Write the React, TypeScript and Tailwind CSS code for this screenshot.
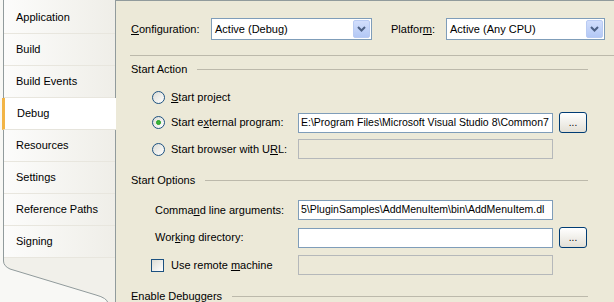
import React from 'react';

const tabs = ['Application', 'Build', 'Build Events', 'Debug', 'Resources', 'Settings', 'Reference Paths', 'Signing'];

const Chevron = () => (
  <svg width="9" height="6" viewBox="0 0 9 6">
    <path d="M1 1 L4.5 4.5 L8 1" fill="none" stroke="#4d6185" strokeWidth="2" />
  </svg>
);

const Combo = ({ value, width }: { value: string; width: string }) => (
  <div className={`${width} h-[22px] flex items-stretch border border-[#7f9db9] bg-white p-px`}>
    <span className="flex-1 pl-[2px] flex items-center">{value}</span>
    <span className="w-[17px] flex items-center justify-center rounded-[2px] border border-[#b9cbf3] bg-gradient-to-b from-[#d2defc] to-[#b3c8f5]">
      <Chevron />
    </span>
  </div>
);

const GroupHeader = ({ title, className }: { title: string; className: string }) => (
  <div className={`flex items-center h-[14px] mr-[26px] ${className}`}>
    <span>{title}</span>
    <span className="flex-1 ml-[10px] h-px bg-[#bcb9ab]" />
  </div>
);

const Radio = ({ checked }: { checked?: boolean }) => (
  <span className="w-[13px] h-[13px] rounded-full border border-[#1c5180] bg-gradient-to-br from-[#dcdcd5] to-white flex items-center justify-center">
    {checked && <span className="w-[5px] h-[5px] rounded-full bg-[#3bb33b] border border-[#21a121]" />}
  </span>
);

const TextBox = ({ value, disabled }: { value?: string; disabled?: boolean }) => (
  <div
    className={`w-[255px] h-[20px] border overflow-hidden whitespace-nowrap pl-[2px] flex items-center text-[10.5px] ${
      disabled ? 'bg-[#ece9d8] border-[#b5b8ba]' : 'bg-white border-[#7f9db9]'
    }`}
  >
    {value}
  </div>
);

const Browse = () => (
  <div className="ml-[6px] w-[28px] h-[21px] rounded-[3px] border border-[#003c74] bg-gradient-to-b from-white to-[#e3e0d6] flex items-end justify-center pb-[4px] leading-none text-[10px]">
    ...
  </div>
);

export default function App() {
  return (
    <div className="w-[614px] h-[302px] overflow-hidden flex text-[11px] text-black font-['Liberation_Sans',Arial,sans-serif]">
      {/* Tab strip */}
      <div className="w-[115px] shrink-0 flex flex-col bg-[#f8f8f5]">
        <div className="ml-[3px] border-l border-[#919b9c] bg-gradient-to-r from-[#fcfcfb] to-[#efeee8] pt-[2px]">
          {tabs.map((t) =>
            t === 'Debug' ? (
              <div
                key={t}
                className="relative z-10 h-[32px] -ml-[2px] mr-[-1px] border-l-[3px] border-l-[#f2b446] border-b border-b-[#e6e4dc] bg-white pl-[12px] flex items-center"
              >
                {t}
              </div>
            ) : (
              <div key={t} className="h-[32px] border-b border-[#e8e6de] pl-[12px] flex items-center">
                {t}
              </div>
            )
          )}
        </div>
        <svg width="115" height="45" viewBox="0 0 115 45" className="shrink-0">
          <path d="M0 0 H115 V45 H108 Q107 40 96 37 L10 11 Q3.5 8 3.5 3 V0 Z" fill="#f1f0ea" />
          <path d="M3.5 0 V3 Q3.5 8 10 11 L96 37 Q107 40 108 45" fill="none" stroke="#919b9c" strokeWidth="1" />
        </svg>
      </div>

      {/* Property page */}
      <div className="flex-1 border-l border-t border-[#919b9c] bg-[#ece9d8] pl-[15px]">
        <div className="flex items-center mt-[17px]">
          <span className="w-[80px]">
            <u>C</u>onfiguration:
          </span>
          <Combo value="Active (Debug)" width="w-[161px]" />
          <span className="ml-[19px] w-[55px]">
            Platfor<u>m</u>:
          </span>
          <Combo value="Active (Any CPU)" width="w-[159px]" />
        </div>

        <div className="mt-[15px] -ml-px h-px bg-[#bcb9ab]" />

        <GroupHeader title="Start Action" className="mt-[6px]" />

        <div className="flex items-center h-[20px] mt-[11px] pl-[21px]">
          <Radio />
          <span className="ml-[6px]">
            <u>S</u>tart project
          </span>
        </div>
        <div className="flex items-center h-[21px] mt-[5px]">
          <div className="w-[167px] pl-[21px] flex items-center">
            <Radio checked />
            <span className="ml-[6px]">
              Start e<u>x</u>ternal program:
            </span>
          </div>
          <TextBox value="E:\Program Files\Microsoft Visual Studio 8\Common7" />
          <Browse />
        </div>
        <div className="flex items-center h-[20px] mt-[6px]">
          <div className="w-[167px] pl-[21px] flex items-center">
            <Radio />
            <span className="ml-[6px]">
              Start browser with U<u>R</u>L:
            </span>
          </div>
          <TextBox disabled />
        </div>

        <GroupHeader title="Start Options" className="mt-[14px]" />

        <div className="flex items-center h-[20px] mt-[13px]">
          <div className="w-[167px] pl-[24px]">
            Comma<u>n</u>d line arguments:
          </div>
          <TextBox value="5\PluginSamples\AddMenuItem\bin\AddMenuItem.dl" />
        </div>
        <div className="flex items-center h-[21px] mt-[7px]">
          <div className="w-[167px] pl-[24px]">
            Wor<u>k</u>ing directory:
          </div>
          <TextBox />
          <Browse />
        </div>
        <div className="flex items-center h-[20px] mt-[7px]">
          <div className="w-[167px] pl-[20px] flex items-center">
            <span className="w-[13px] h-[13px] border border-[#1c5180] bg-gradient-to-br from-[#dcdcd5] to-white" />
            <span className="ml-[7px]">
              Use remote <u>m</u>achine
            </span>
          </div>
          <TextBox disabled />
        </div>

        <GroupHeader title="Enable Debuggers" className="mt-[14px]" />
      </div>
    </div>
  );
}
